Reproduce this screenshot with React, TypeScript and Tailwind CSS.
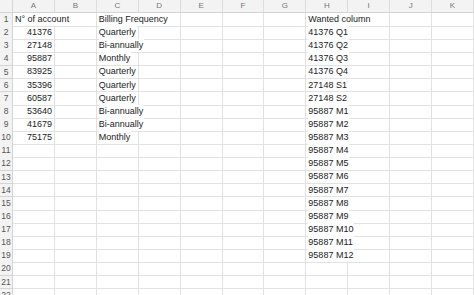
const cols = ['A', 'B', 'C', 'D', 'E', 'F', 'G', 'H', 'I', 'J', 'K'];

const data: Record<number, { a?: string; c?: string; h?: string; headA?: boolean }> = {
  1: { a: 'N° of account', c: 'Billing Frequency', h: 'Wanted column', headA: true },
  2: { a: '41376', c: 'Quarterly', h: '41376 Q1' },
  3: { a: '27148', c: 'Bi-annually', h: '41376 Q2' },
  4: { a: '95887', c: 'Monthly', h: '41376 Q3' },
  5: { a: '83925', c: 'Quarterly', h: '41376 Q4' },
  6: { a: '35396', c: 'Quarterly', h: '27148 S1' },
  7: { a: '60587', c: 'Quarterly', h: '27148 S2' },
  8: { a: '53640', c: 'Bi-annually', h: '95887 M1' },
  9: { a: '41679', c: 'Bi-annually', h: '95887 M2' },
  10: { a: '75175', c: 'Monthly', h: '95887 M3' },
  11: { h: '95887 M4' },
  12: { h: '95887 M5' },
  13: { h: '95887 M6' },
  14: { h: '95887 M7' },
  15: { h: '95887 M8' },
  16: { h: '95887 M9' },
  17: { h: '95887 M10' },
  18: { h: '95887 M11' },
  19: { h: '95887 M12' },
};

const rows = Array.from({ length: 22 }, (_, i) => i + 1);

export default function App() {
  return (
    <div className="w-[474px] h-[295px] overflow-hidden bg-white text-[9px] text-[#222] font-['Liberation_Sans',sans-serif]">
      {/* column letters */}
      <div className="grid grid-cols-[13px_repeat(11,1fr)] h-[13px] bg-[#f3f3f3] border-b border-[#d4d4d4]">
        <div className="border-r border-[#d4d4d4]" />
        {cols.map((c) => (
          <div key={c} className="flex items-center justify-center text-[8px] text-[#777] border-r border-[#dcdcdc]">
            {c}
          </div>
        ))}
      </div>

      {rows.map((r) => {
        const d = data[r] || {};
        return (
          <div key={r} className="grid grid-cols-[13px_repeat(11,1fr)] h-[13.14px]">
            <div className="flex items-center justify-center text-[8.5px] text-[#555] bg-[#f3f3f3] border-r border-b border-[#d4d4d4]">
              {r}
            </div>
            {cols.map((c) => {
              let text: string | undefined;
              let right = false;
              if (c === 'A') {
                text = d.a;
                right = !d.headA && !!d.a;
              }
              if (c === 'C') text = d.c;
              if (c === 'H') text = d.h;
              return (
                <div
                  key={c}
                  className={`relative border-b border-r border-[#e2e2e2] ${text ? 'z-10' : ''}`}
                >
                  {text && (
                    <span
                      className={`absolute top-0 bottom-0 flex items-center whitespace-nowrap leading-none ${
                        right ? 'right-[2px]' : 'left-[2px]'
                      } ${!right ? 'bg-white pr-[1px]' : ''}`}
                    >
                      {text}
                    </span>
                  )}
                </div>
              );
            })}
          </div>
        );
      })}
    </div>
  );
}
